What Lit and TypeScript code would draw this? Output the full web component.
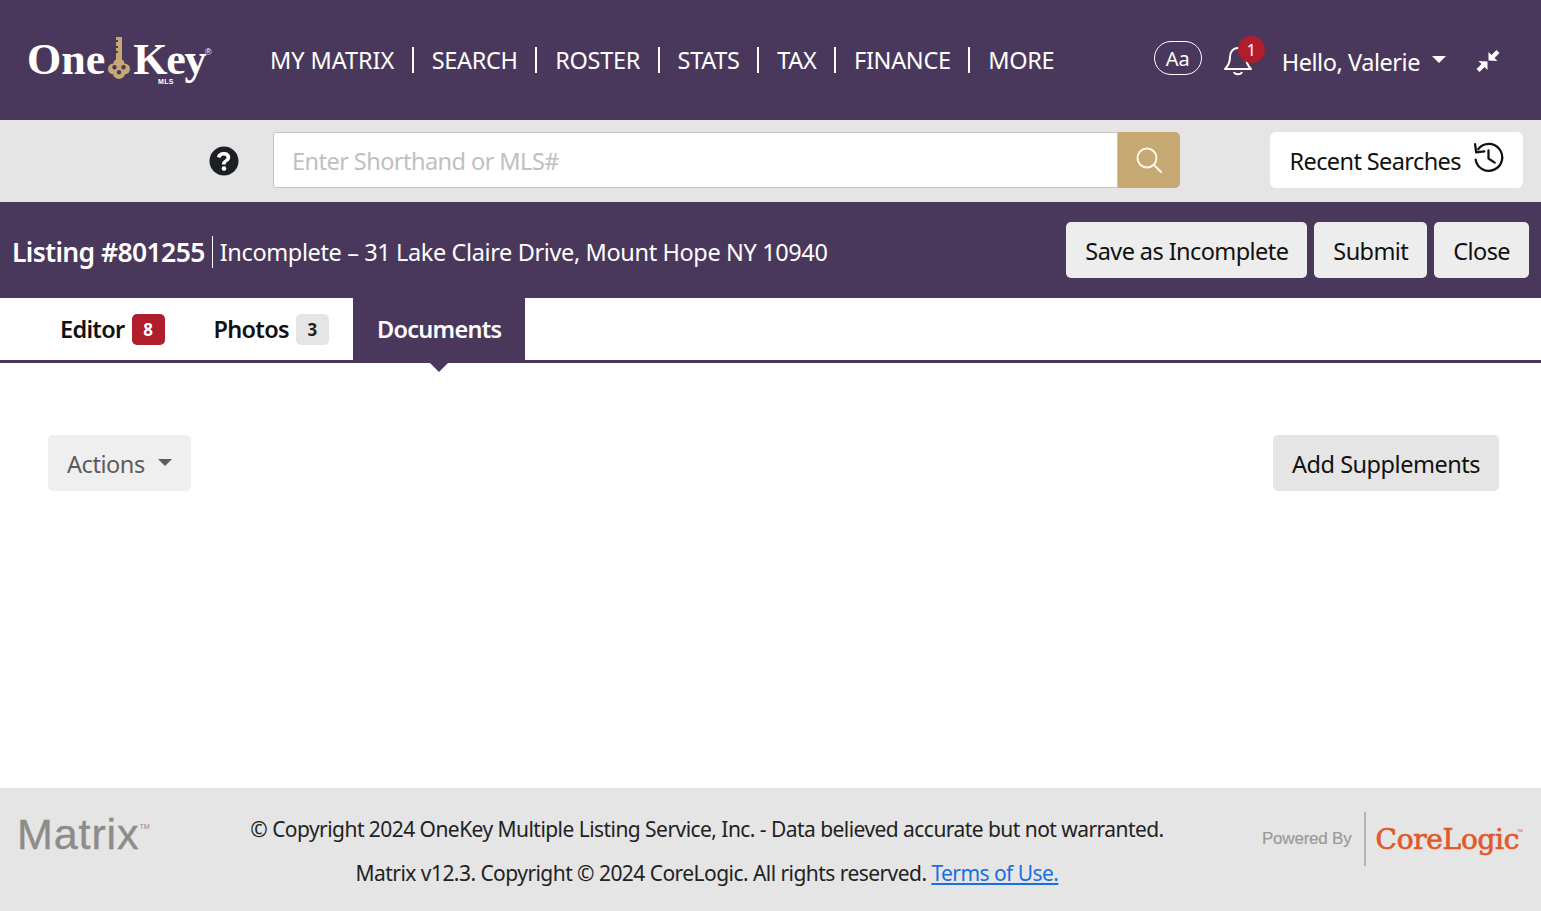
import { LitElement, html, css } from "lit";
import { customElement } from "lit/decorators.js";

const NAV = ["MY MATRIX", "SEARCH", "ROSTER", "STATS", "TAX", "FINANCE", "MORE"];

@customElement("app-root")
export class AppRoot extends LitElement {
  static styles = css`
    :host {
      display: flex;
      flex-direction: column;
      min-height: 911px;
      font-family: "Noto Sans", "Open Sans", sans-serif;
      color: #111;
      background: #fff;
    }
    .top {
      height: 120px;
      background: #4a385c;
      color: #fff;
      display: flex;
      align-items: center;
      padding: 0 41px 0 27px;
      box-sizing: border-box;
    }
    .logo {
      display: flex;
      align-items: center;
      width: 243px;
      position: relative;
      font-family: "Liberation Serif", serif;
      font-weight: 700;
      font-size: 44px;
      letter-spacing: 0;
      height: 60px;
      line-height: 52px;
    }
    .logo svg {
      width: 24px;
      height: 42px;
      margin: -5px 2px 0 2px;
    }
    .logo span {
      letter-spacing: -1.2px;
    }
    .logo small {
      position: absolute;
      left: 131px;
      top: 48px;
      font: 700 7px/8px "Liberation Sans", sans-serif;
      letter-spacing: 0.3px;
    }
    .logo sup {
      position: absolute;
      left: 178px;
      top: 17px;
      font: 400 9px/10px "Liberation Sans", sans-serif;
      letter-spacing: 0;
    }
    nav {
      display: flex;
      align-items: center;
      font-size: 23.5px;
      letter-spacing: -0.3px;
    }
    nav a {
      padding: 0 17.5px 0 18px;
      line-height: 26px;
      border-left: 2px solid #fff;
    }
    nav a:first-child {
      border-left: none;
      padding: 0 17.5px 0 0;
      letter-spacing: -0.08px;
    }
    .right {
      margin-left: auto;
      display: flex;
      align-items: center;
    }
    .aa {
      width: 46px;
      height: 32px;
      border: 1px solid #fff;
      border-radius: 17px;
      display: flex;
      align-items: center;
      justify-content: center;
      font-size: 20px;
      margin-top: -4px;
    }
    .bell {
      position: relative;
      width: 30px;
      height: 32px;
      margin-left: 21px;
    }
    .bell svg {
      width: 30px;
      height: 32px;
    }
    .dot {
      position: absolute;
      left: 15px;
      top: -8px;
      width: 27px;
      height: 27px;
      border-radius: 50%;
      background: #b01e2e;
      font-size: 16px;
      display: flex;
      align-items: center;
      justify-content: center;
    }
    .hello {
      margin-left: 29px;
      padding-top: 3px;
      font-size: 23.5px;
      letter-spacing: -0.45px;
      display: flex;
      align-items: center;
    }
    .caret {
      display: inline-block;
      width: 0;
      height: 0;
      border-left: 7px solid transparent;
      border-right: 7px solid transparent;
      border-top: 7px solid currentColor;
    }
    .hello .caret {
      margin-left: 12px;
      margin-top: -5px;
    }
    .shrink {
      width: 24px;
      height: 24px;
      margin: 2px 0 0 30px;
    }
    .searchbar {
      height: 82px;
      background: #e5e5e5;
      display: flex;
      align-items: center;
      padding: 0 18px 2px 209px;
      box-sizing: border-box;
    }
    .help {
      width: 30px;
      height: 30px;
      margin-top: 2px;
    }
    .field {
      margin-left: 34px;
      width: 845px;
      height: 56px;
      box-sizing: border-box;
      background: #fff;
      border: 1px solid #c4c4c4;
      border-radius: 3px 0 0 3px;
      color: #c0c0c0;
      font-size: 23.5px;
      letter-spacing: -0.55px;
      display: flex;
      align-items: center;
      padding: 2px 0 0 18px;
    }
    .go {
      width: 62px;
      height: 56px;
      background: #c6a873;
      border-radius: 0 5px 5px 0;
      display: flex;
      align-items: center;
      justify-content: center;
    }
    .go svg {
      width: 28px;
      height: 28px;
    }
    .recent {
      margin-left: auto;
      width: 253px;
      height: 56px;
      background: #fff;
      border-radius: 6px;
      display: flex;
      align-items: center;
      box-sizing: border-box;
      padding: 2px 0 0 19.5px;
      font-size: 23.5px;
      letter-spacing: -0.6px;
    }
    .recent svg {
      width: 33px;
      height: 33px;
      margin-left: 11px;
      margin-top: -7px;
    }
    .listing {
      height: 96px;
      background: #4a385c;
      color: #fff;
      display: flex;
      align-items: center;
      padding: 0 12px;
      box-sizing: border-box;
    }
    .title {
      display: flex;
      align-items: center;
      padding-top: 3px;
    }
    .title b {
      font-size: 26.5px;
      font-weight: 600;
      letter-spacing: -0.6px;
      padding-right: 7px;
      border-right: 1px solid #fff;
      line-height: 32px;
    }
    .title span {
      font-size: 23.5px;
      letter-spacing: -0.38px;
      padding-left: 7px;
    }
    .actions {
      margin-left: auto;
      display: flex;
      gap: 7px;
    }
    .btn {
      height: 56px;
      padding: 2px 19px 0;
      box-sizing: border-box;
      background: #ededed;
      color: #111;
      border-radius: 5px;
      display: flex;
      align-items: center;
      font-size: 23.5px;
      letter-spacing: -0.58px;
    }
    .tabs {
      height: 65px;
      border-bottom: 3px solid #4a385c;
      box-sizing: border-box;
      display: flex;
      padding-left: 60px;
      font-size: 23.5px;
      font-weight: 600;
      letter-spacing: -0.7px;
    }
    .tab {
      display: flex;
      align-items: center;
      margin-right: 49px;
    }
    .count {
      margin-left: 7px;
      width: 33px;
      height: 31px;
      border-radius: 5px;
      background: #b01e2e;
      color: #fff;
      font-size: 17px;
      font-weight: 700;
      letter-spacing: 0;
      display: flex;
      align-items: center;
      justify-content: center;
    }
    .count.grey {
      background: #e5e5e5;
      color: #222;
    }
    .tab.active {
      position: relative;
      margin: 0 0 -3px -25px;
      padding: 0 23px 3px 24px;
      background: #4a385c;
      color: #fff;
    }
    .tab.active::after {
      content: "";
      position: absolute;
      left: 50%;
      bottom: -9px;
      margin-left: -9px;
      border-left: 9px solid transparent;
      border-right: 9px solid transparent;
      border-top: 9px solid #4a385c;
    }
    .body {
      flex: 1;
      display: flex;
      justify-content: space-between;
      align-items: flex-start;
      padding: 72px 42px 0 48px;
    }
    .body .btn.menu {
      color: #5c5c5c;
      background: #efefef;
      width: 143px;
      letter-spacing: -0.45px;
    }
    .body .btn.menu .caret {
      margin-left: 13px;
      margin-top: -3px;
    }
    .body .btn.add {
      background: #e5e5e5;
      letter-spacing: -0.48px;
    }
    footer {
      height: 123px;
      background: #e5e5e5;
      display: flex;
      box-sizing: border-box;
    }
    .matrix {
      width: 250px;
      flex: none;
      padding: 22px 0 0 17px;
      box-sizing: border-box;
      font: 400 43px "Liberation Sans", sans-serif;
      color: #8f8c88;
      letter-spacing: 0.9px;
      -webkit-text-stroke: 0.4px #8f8c88;
    }
    .matrix sup {
      font-size: 7px;
      vertical-align: 20px;
      letter-spacing: 0;
      -webkit-text-stroke: 0;
    }
    .legal {
      flex: none;
      width: 914px;
      text-align: center;
      font-size: 21px;
      letter-spacing: -0.55px;
      color: #222;
      line-height: 44px;
      padding-top: 19px;
      white-space: nowrap;
    }
    .legal a {
      color: #1a6fe0;
      text-decoration: underline;
    }
    .power {
      margin-left: auto;
      display: flex;
      align-items: center;
      padding: 0 18px 0 0;
      height: 54px;
      margin-top: 24px;
    }
    .power i {
      font: 400 17px "Liberation Sans", sans-serif;
      color: #9a9a9a;
      letter-spacing: -0.2px;
      -webkit-text-stroke: 0.2px #9a9a9a;
    }
    .power u {
      display: block;
      width: 2px;
      height: 54px;
      background: #b5b3ae;
      margin: 0 10px 0 12px;
    }
    .power strong {
      font: 400 28px "DejaVu Serif", serif;
      color: #e2582a;
      letter-spacing: -0.3px;
      -webkit-text-stroke: 0.7px #e2582a;
    }
    .power sup {
      font-size: 4px;
      color: #e2582a;
      align-self: flex-start;
      margin: 16px 0 0 -2px;
    }
  `;

  render() {
    return html`
      <div class="top">
        <div class="logo">
          One<svg viewBox="0 0 24 42" fill="#c6a873">
            <path d="M9 0h6v25h-6V16h2v-2H9v-3h2V9H9V5h2V3H9z" />
            <path
              fill-rule="evenodd"
              d="M12 22c3.500 0 5.500 2 5.500 4.500 3 .2 5.500 2.300 5.500 5.500 0 3-2 5-5 5.300-.5 2.500-3 4.700-6 4.700s-5.500-2.200-6-4.700c-3-.3-5-2.300-5-5.300 0-3.200 2.500-5.300 5.500-5.500C6.500 24 8.500 22 12 22zM7.500 28a2.200 2.200 0 100 4.400 2.200 2.200 0 000-4.400zm9 0a2.200 2.200 0 100 4.400 2.200 2.200 0 000-4.400zM12 33a2.200 2.200 0 100 4.400 2.200 2.200 0 000-4.400z"
            /></svg
          ><span>Key</span>
          <small>MLS</small>
          <sup>®</sup>
        </div>
        <nav>${NAV.map((n) => html`<a>${n}</a>`)}</nav>
        <div class="right">
          <div class="aa">Aa</div>
          <div class="bell">
            <svg viewBox="0 0 30 32" fill="none" stroke="#fff" stroke-width="2" stroke-linejoin="round">
              <path d="M15 4c-5 0-8 4-8 9 0 6-2 9-5 12h26c-3-3-5-6-5-12 0-5-3-9-8-9z" />
              <path d="M11 28c1 3 7 3 8 0" />
            </svg>
            <div class="dot">1</div>
          </div>
          <div class="hello">Hello, Valerie<span class="caret"></span></div>
          <svg class="shrink" viewBox="0 0 24 24" fill="#fff">
            <path d="M12.500 11.500V3l3 3 5-5 3 3-5 5 3 3z" />
            <path d="M11.500 12.500V21l-3-3-5 5-3-3 5-5-3-3z" />
          </svg>
        </div>
      </div>

      <div class="searchbar">
        <svg class="help" viewBox="0 0 30 30">
          <circle cx="15" cy="15" r="14.500" fill="#1c1f26" />
          <path
            d="M15 6c-4 0-6.500 2-7 5l3.500 1c.4-1.500 1.500-2.500 3.300-2.500 1.600 0 2.700.8 2.700 2 0 1-.7 1.600-1.900 2.400-1.600 1-2.600 2-2.600 4v.6h3.700v-.4c0-1 .5-1.500 1.700-2.300 1.700-1.100 2.800-2.300 2.800-4.500C21.200 8 18.700 6 15 6z"
            fill="#fff"
          />
          <circle cx="15" cy="22.500" r="2.300" fill="#fff" />
        </svg>
        <div class="field">Enter Shorthand or MLS#</div>
        <div class="go">
          <svg viewBox="0 0 28 28" fill="none" stroke="#fff8e6" stroke-width="2">
            <circle cx="12" cy="12" r="9.500" />
            <path d="M19 19l7 7" stroke-linecap="round" />
          </svg>
        </div>
        <div class="recent">
          Recent Searches
          <svg viewBox="0 0 32 32" fill="none" stroke="#111" stroke-width="2.200" stroke-linecap="round">
            <path d="M6 8a13 13 0 11-2.500 10" />
            <path d="M3 3l1 8 8-1" stroke-linejoin="round" />
            <path d="M16 9v8l6 4" stroke-linejoin="round" />
          </svg>
        </div>
      </div>

      <div class="listing">
        <div class="title">
          <b>Listing #801255</b>
          <span>Incomplete – 31 Lake Claire Drive, Mount Hope NY 10940</span>
        </div>
        <div class="actions">
          <div class="btn">Save as Incomplete</div>
          <div class="btn">Submit</div>
          <div class="btn">Close</div>
        </div>
      </div>

      <div class="tabs">
        <div class="tab">Editor<span class="count">8</span></div>
        <div class="tab">Photos<span class="count grey">3</span></div>
        <div class="tab active">Documents</div>
      </div>

      <div class="body">
        <div class="btn menu">Actions<span class="caret"></span></div>
        <div class="btn add">Add Supplements</div>
      </div>

      <footer>
        <div class="matrix">Matrix<sup>TM</sup></div>
        <div class="legal">
          © Copyright 2024 OneKey Multiple Listing Service, Inc. - Data believed accurate but not warranted.<br />
          Matrix v12.3. Copyright © 2024 CoreLogic. All rights reserved. <a>Terms of Use.</a>
        </div>
        <div class="power">
          <i>Powered By</i><u></u><strong>CoreLogic</strong><sup>TM</sup>
        </div>
      </footer>
    `;
  }
}
